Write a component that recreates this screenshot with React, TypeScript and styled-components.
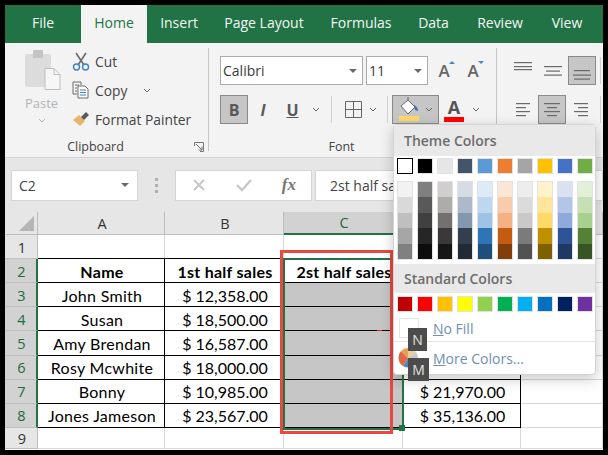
import styled, { createGlobalStyle } from "styled-components";

const GlobalStyle = createGlobalStyle`
  html, body {
    margin: 0;
    padding: 0;
    background: #000;
  }
  * {
    box-sizing: border-box;
  }
`;

const UI_FONT = `"Open Sans", "Noto Sans", sans-serif`;
const CELL_FONT = `Lato, "Open Sans", sans-serif`;
const GREEN = "#217346";

const Frame = styled.div`
  width: 608px;
  height: 455px;
  padding: 5px;
  background: #000;
  overflow: hidden;
  font-family: ${UI_FONT};
`;

const Window = styled.div`
  position: relative;
  width: 598px;
  height: 445px;
  background: #fff;
  overflow: hidden;
`;

const TabBar = styled.div`
  display: flex;
  height: 38px;
  background: ${GREEN};
`;

const Tab = styled.div<{ $w: number; $active?: boolean }>`
  width: ${(p) => p.$w}px;
  display: flex;
  align-items: center;
  justify-content: center;
  padding-bottom: 3px;
  font-size: 14px;
  color: ${(p) => (p.$active ? GREEN : "#f4f7f5")};
  background: ${(p) => (p.$active ? "#f3f3f3" : "transparent")};
`;

const Ribbon = styled.div`
  display: flex;
  height: 115px;
  background: #f3f3f3;
  border-bottom: 1px solid #d4d4d4;
`;

const Group = styled.div<{ $w: number; $last?: boolean }>`
  position: relative;
  width: ${(p) => p.$w}px;
  margin-top: 5px;
  height: 103px;
  border-right: ${(p) => (p.$last ? "none" : "1px solid #c4c4c4")};
  padding-top: 8px;
`;

const GroupLabel = styled.div`
  position: absolute;
  left: 0;
  right: 0;
  bottom: -5px;
  height: 18px;
  padding-right: 22px;
  line-height: 18px;
  text-align: center;
  font-size: 12.5px;
  color: #444;
`;

const Launcher = styled.svg`
  position: absolute;
  right: 4px;
  bottom: -1px;
`;

const ClipBody = styled.div`
  display: flex;
`;

const PasteCol = styled.div`
  width: 67px;
  display: flex;
  flex-direction: column;
  align-items: center;
  padding-left: 6px;
  margin-top: -6px;
  color: #b4b4b4;
  font-size: 13px;
`;

const PasteLabel = styled.div`
  margin: 4px 0 6px;
  line-height: 18px;
`;

const ClipList = styled.div`
  display: flex;
  flex-direction: column;
  margin-top: -9.5px;
`;

const ClipItem = styled.div`
  height: 29px;
  display: flex;
  align-items: center;
  gap: 5px;
  font-size: 13.8px;
  color: #444;
  white-space: nowrap;
`;

const IconSlot = styled.span`
  width: 18px;
  display: flex;
  justify-content: center;
`;

const ToolRow = styled.div`
  display: flex;
  align-items: center;
  height: 29px;
  margin-left: 11px;
  margin-bottom: 10px;
`;

const SelectBox = styled.div<{ $w: number }>`
  width: ${(p) => p.$w}px;
  height: 29px;
  margin-right: 3px;
  padding: 0 2px;
  display: flex;
  align-items: center;
  justify-content: space-between;
  background: #fff;
  border: 1px solid #ababab;
  font-size: 14px;
  color: #3a3a3a;
`;

const Caret = styled.span`
  width: 0;
  height: 0;
  margin-right: 3px;
  border-left: 4px solid transparent;
  border-right: 4px solid transparent;
  border-top: 4px solid #6a6a6a;
`;

const ToolBtn = styled.div<{ $w: number; $on?: boolean }>`
  width: ${(p) => p.$w}px;
  height: 29px;
  flex: none;
  display: flex;
  align-items: center;
  justify-content: center;
  gap: ${(p) => (p.$w > 40 ? 6 : 0)}px;
  border: 1px solid ${(p) => (p.$on ? "#8a8a8a" : "transparent")};
  background: ${(p) => (p.$on ? "#c6c6c6" : "transparent")};
  color: #5a5a5a;
  font-size: 16px;
`;

const Separator = styled.span<{ $ml: number; $mr: number }>`
  width: 1px;
  height: 27px;
  margin: 0 ${(p) => p.$mr}px 0 ${(p) => p.$ml}px;
  flex: none;
  background: #d0d0d0;
`;

const StyledLetter = styled.span<{ $italic?: boolean; $under?: boolean }>`
  font-family: ${UI_FONT};
  font-weight: 700;
  font-style: ${(p) => (p.$italic ? "italic" : "normal")};
  text-decoration: ${(p) => (p.$under ? "underline" : "none")};
`;

const SizeLetter = styled.span`
  position: relative;
  margin-right: 4px;
  font-size: 17px;
  line-height: 20px;
  font-weight: 600;
  color: #666;
`;

const SizeArrow = styled.span<{ $up: boolean }>`
  position: absolute;
  right: -5px;
  top: 0;
  width: 0;
  height: 0;
  border-left: 3px solid transparent;
  border-right: 3px solid transparent;
  border-bottom: ${(p) => (p.$up ? "3px solid #4a86c5" : "none")};
  border-top: ${(p) => (p.$up ? "none" : "3px solid #4a86c5")};
`;

const ColorLetter = styled.span`
  display: flex;
  flex-direction: column;
  align-items: center;
  width: 20px;
  font-size: 18px;
  line-height: 18px;
  font-weight: 700;
  color: #555;
`;

const ColorBar = styled.span`
  width: 20px;
  height: 5px;
  margin-top: 1px;
  background: #ff0000;
`;

const FormulaArea = styled.div`
  display: flex;
  align-items: center;
  height: 54px;
  padding-left: 6px;
  background: #e6e6e6;
`;

const NameBox = styled.div`
  width: 127px;
  height: 31px;
  padding: 0 5px 0 7px;
  display: flex;
  align-items: center;
  justify-content: space-between;
  background: #fff;
  border: 1px solid #d5d5d5;
  font-size: 14px;
  color: #444;
`;

const Grip = styled.div`
  width: 37px;
  display: flex;
  flex-direction: column;
  align-items: center;
  gap: 3px;
`;

const GripDot = styled.span`
  width: 3px;
  height: 3px;
  background: #b0b0b0;
`;

const FxBox = styled.div`
  width: 137px;
  height: 31px;
  padding: 0 15px 0 15px;
  display: flex;
  align-items: center;
  justify-content: space-between;
  background: #fff;
  border: 1px solid #d5d5d5;
`;

const FxText = styled.span`
  font-family: "Liberation Serif", serif;
  font-style: italic;
  font-weight: 700;
  font-size: 17px;
  color: #777;
`;

const FormulaInput = styled.div`
  flex: 1;
  height: 31px;
  margin-left: 3px;
  padding-left: 14px;
  display: flex;
  align-items: center;
  background: #fff;
  border: 1px solid #d5d5d5;
  font-size: 14px;
  color: #444;
`;

const Sheet = styled.div`
  position: relative;
  display: grid;
  grid-template-columns: 33px 127px 119px 119px 118px 82px;
  grid-template-rows: 23px 24px repeat(7, 24.14px);
  background: #fff;
  font-family: ${CELL_FONT};
  font-size: 16px;
  color: #000;
`;

const Corner = styled.div`
  position: relative;
  background: #e6e6e6;
  border-right: 1px solid #bdbdbd;
  border-bottom: 1px solid #bdbdbd;
`;

const CornerMark = styled.span`
  position: absolute;
  right: 3px;
  bottom: 3px;
  width: 0;
  height: 0;
  border-left: 15px solid transparent;
  border-bottom: 15px solid #b5b5b5;
`;

const ColHead = styled.div<{ $sel?: boolean }>`
  display: flex;
  align-items: center;
  justify-content: center;
  padding-left: 2px;
  font-family: ${UI_FONT};
  font-size: 14.5px;
  color: ${(p) => (p.$sel ? "#1d6b3f" : "#333")};
  background: ${(p) => (p.$sel ? "#d2d2d2" : "#e6e6e6")};
  border-right: 1px solid #bdbdbd;
  border-bottom: ${(p) => (p.$sel ? `2px solid ${GREEN}` : "1px solid #bdbdbd")};
`;

const RowHead = styled.div<{ $sel?: boolean }>`
  display: flex;
  align-items: center;
  justify-content: center;
  padding: 1px 0 0 2px;
  font-family: ${UI_FONT};
  font-size: 14.5px;
  color: ${(p) => (p.$sel ? "#1d6b3f" : "#333")};
  background: ${(p) => (p.$sel ? "#d2d2d2" : "#e6e6e6")};
  border-right: ${(p) => (p.$sel ? `2px solid ${GREEN}` : "1px solid #bdbdbd")};
  border-bottom: 1px solid #bdbdbd;
`;

const Cell = styled.div<{ $boxed?: boolean; $bold?: boolean; $fill?: boolean; $num?: boolean }>`
  display: flex;
  align-items: center;
  justify-content: center;
  min-width: 0;
  padding: 1px 0 0 2px;
  white-space: nowrap;
  overflow: hidden;
  letter-spacing: ${(p) => (p.$num ? 0 : 0.28)}px;
  font-weight: ${(p) => (p.$bold ? 700 : 400)};
  background: ${(p) => (p.$fill ? "#c6c6c6" : "#fff")};
  border-right: 1px solid ${(p) => (p.$boxed ? "#000" : "#d8d8d8")};
  border-bottom: 1px solid ${(p) => (p.$boxed ? "#000" : "#d8d8d8")};
`;

const TableTop = styled.div`
  position: absolute;
  left: 33px;
  top: 46px;
  width: 365px;
  height: 1px;
  background: #000;
`;

const SelectionBox = styled.div`
  position: absolute;
  left: 278px;
  top: 46px;
  width: 121px;
  height: 172px;
  border: 2px solid ${GREEN};
  pointer-events: none;
`;

const FillHandle = styled.span`
  position: absolute;
  left: 394px;
  top: 213px;
  width: 6px;
  height: 6px;
  background: ${GREEN};
`;

const RedFrame = styled.div`
  position: absolute;
  left: 275px;
  top: 38px;
  width: 113px;
  height: 184px;
  border: 3px solid #e8483f;
  pointer-events: none;
`;

const RedTick = styled.span`
  position: absolute;
  left: 372px;
  top: 118px;
  width: 5px;
  height: 1px;
  background: #e8202a;
`;

const Popover = styled.div`
  position: absolute;
  left: 388px;
  top: 119px;
  width: 203px;
  height: 251px;
  background: #fff;
  border: 1px solid #d4d4d4;
  border-radius: 4px;
  box-shadow: 0 4px 14px rgba(0, 0, 0, 0.22);
`;

const PopHeader = styled.div<{ $h: number }>`
  height: ${(p) => p.$h}px;
  padding-left: 10px;
  display: flex;
  align-items: center;
  background: #e9e9e9;
  font-size: 14px;
  font-weight: 600;
  color: #6d6d6d;
`;

const SwatchRow = styled.div<{ $mt: number; $mb: number }>`
  display: flex;
  gap: 4px;
  margin: ${(p) => p.$mt}px 0 ${(p) => p.$mb}px 3px;
`;

const Swatch = styled.span<{ $c: string; $strong?: boolean }>`
  width: 16px;
  height: 16px;
  background: ${(p) => p.$c};
  border: 1px solid ${(p) => (p.$strong ? "#000" : "#e2e2e2")};
`;

const ShadeCol = styled.div`
  width: 16px;
  display: flex;
  flex-direction: column;
  border: 1px solid #e2e2e2;
`;

const Shade = styled.span<{ $c: string }>`
  height: 15.4px;
  background: ${(p) => p.$c};
`;

const MenuRow = styled.div<{ $line?: boolean; $h: number }>`
  display: flex;
  align-items: center;
  height: ${(p) => p.$h}px;
  padding-left: 39px;
  font-size: 14px;
  color: #6f8fae;
  border-bottom: ${(p) => (p.$line ? "1px solid #e4e4e4" : "none")};
`;

const NoFillBox = styled.span`
  position: absolute;
  left: 5px;
  top: 193px;
  width: 20px;
  height: 20px;
  border: 1px solid #e4e4e4;
`;

const PieIcon = styled.svg`
  position: absolute;
  left: 4px;
  top: 223px;
`;

const KeyTip = styled.div<{ $x: number; $y: number; $w: number }>`
  position: absolute;
  left: ${(p) => p.$x}px;
  top: ${(p) => p.$y}px;
  width: ${(p) => p.$w}px;
  height: 23px;
  display: flex;
  align-items: center;
  justify-content: center;
  background: #4c4c4c;
  color: #e2e2e2;
  font-size: 14px;
`;

const Underlined = styled.span`
  text-decoration: underline;
`;

const TABS: [string, number][] = [
  ["File", 76],
  ["Home", 66],
  ["Insert", 64],
  ["Page Layout", 106],
  ["Formulas", 88],
  ["Data", 57],
  ["Review", 76],
  ["View", 58],
];

const THEME = [
  "#ffffff",
  "#000000",
  "#e7e6e6",
  "#44546a",
  "#5b9bd5",
  "#ed7d31",
  "#a5a5a5",
  "#ffc000",
  "#4472c4",
  "#70ad47",
];

const SHADES = [
  ["#f2f2f2", "#d9d9d9", "#bfbfbf", "#a6a6a6", "#808080"],
  ["#7f7f7f", "#595959", "#404040", "#262626", "#0d0d0d"],
  ["#d0cece", "#aeabab", "#757070", "#3a3838", "#171616"],
  ["#d6dce4", "#adb9ca", "#8497b0", "#333f4f", "#222b35"],
  ["#deeaf6", "#bdd7ee", "#9dc3e6", "#2e75b5", "#1e4e79"],
  ["#fbe5d5", "#f7cbac", "#f4b183", "#c55a11", "#833c0b"],
  ["#ededed", "#dbdbdb", "#c9c9c9", "#7b7b7b", "#525252"],
  ["#fff2cc", "#fee599", "#ffd966", "#bf9000", "#7f6000"],
  ["#d9e2f3", "#b4c6e7", "#8eaadb", "#2f5496", "#1f3864"],
  ["#e2efd9", "#c5e0b3", "#a8d08d", "#538135", "#375623"],
];

const STANDARD = [
  "#c00000",
  "#ff0000",
  "#ffc000",
  "#ffff00",
  "#92d050",
  "#00b050",
  "#00b0f0",
  "#0070c0",
  "#002060",
  "#7030a0",
];

const ROWS = [
  ["John Smith", "$ 12,358.00", ""],
  ["Susan", "$ 18,500.00", ""],
  ["Amy Brendan", "$ 16,587.00", ""],
  ["Rosy Mcwhite", "$ 18,000.00", ""],
  ["Bonny", "$ 10,985.00", "$ 21,970.00"],
  ["Jones Jameson", "$ 23,567.00", "$ 35,136.00"],
];

const Chevron = ({ color = "#666" }: { color?: string }) => (
  <svg width="8" height="5" viewBox="0 0 8 5">
    <path d="M1 1l3 3 3-3" fill="none" stroke={color} strokeWidth="1" />
  </svg>
);

const Lines = ({ rows }: { rows: [number, number, number][] }) => (
  <svg width="20" height="20" viewBox="0 0 20 20">
    {rows.map(([y, x, w], i) => (
      <rect key={i} x={x} y={y} width={w} height="1.2" fill="#6a6a6a" />
    ))}
  </svg>
);

const PasteIcon = () => (
  <svg width="37" height="40" viewBox="0 0 37 40" style={{ marginLeft: 3 }}>
    <rect x="0" y="4" width="26" height="33" rx="2" fill="#dcdcdc" />
    <rect x="8" y="0" width="10" height="8" rx="1" fill="#c4c4c4" />
    <path d="M20 18.5h9l6 6v15H20z" fill="#f6f6f6" stroke="#bdbdbd" />
    <path d="M29 18.5v6h6" fill="none" stroke="#bdbdbd" />
  </svg>
);

const ScissorsIcon = () => (
  <svg width="18" height="19" viewBox="0 0 18 19">
    <path d="M4 1l8 12M14 1L6 13" stroke="#6a6a6a" strokeWidth="1.6" fill="none" />
    <circle cx="4.5" cy="15" r="3" fill="none" stroke="#3f7fc4" strokeWidth="1.4" />
    <circle cx="13.5" cy="15" r="3" fill="none" stroke="#3f7fc4" strokeWidth="1.4" />
  </svg>
);

const CopyIcon = () => (
  <svg width="18" height="18" viewBox="0 0 18 18">
    <path d="M1 1h8v3M1 1v12h4" fill="none" stroke="#6a6a6a" />
    <path d="M3 4h4M3 7h2M3 10h2" stroke="#6a6a6a" />
    <path d="M6 5h7l3 3v9H6z" fill="#fff" stroke="#6a6a6a" />
    <path d="M8 9h6M8 11.5h6M8 14h6" stroke="#3f7fc4" />
  </svg>
);

const BrushIcon = () => (
  <svg width="18" height="16" viewBox="0 0 18 16">
    <path d="M1 9l6-5 6 6-5 5z" fill="#e8b66b" />
    <path d="M9 6l5-5 3 3-5 5z" fill="#5a5a5a" />
  </svg>
);

const BorderIcon = () => (
  <svg width="17" height="17" viewBox="0 0 17 17">
    <path d="M.5.5h16v16H.5zM8.5.5v16M.5 8.5h16" fill="none" stroke="#666" />
  </svg>
);

const FillIcon = () => (
  <svg width="20" height="25" viewBox="0 0 20 25">
    <path d="M2 9l7-6 7 7-7 7z" fill="#fff" stroke="#666" />
    <path d="M9 3V0" stroke="#666" />
    <path d="M15 8c2 1 4 3 4 6l-3-1z" fill="#2f6fb8" />
    <rect x="0" y="19" width="20" height="5" fill="#ffd966" />
  </svg>
);

const App = () => {
  return (
    <>
      <GlobalStyle />
      <Frame>
        <Window>
          <TabBar>
            {TABS.map(([name, w]) => (
              <Tab key={name} $w={w} $active={name === "Home"}>
                {name}
              </Tab>
            ))}
          </TabBar>

          <Ribbon>
            <Group $w={204}>
              <ClipBody>
                <PasteCol>
                  <PasteIcon />
                  <PasteLabel>Paste</PasteLabel>
                  <Chevron color="#b4b4b4" />
                </PasteCol>
                <ClipList>
                  <ClipItem>
                    <IconSlot>
                      <ScissorsIcon />
                    </IconSlot>
                    Cut
                  </ClipItem>
                  <ClipItem>
                    <IconSlot>
                      <CopyIcon />
                    </IconSlot>
                    Copy&nbsp;&nbsp;&nbsp;
                    <Chevron />
                  </ClipItem>
                  <ClipItem>
                    <IconSlot>
                      <BrushIcon />
                    </IconSlot>
                    Format Painter
                  </ClipItem>
                </ClipList>
              </ClipBody>
              <GroupLabel>Clipboard</GroupLabel>
              <Launcher width="10" height="10" viewBox="0 0 10 10">
                <path d="M.5 4V.5H9.5V9.5H6M2 2l6 6M8 4.5V8H4.5" fill="none" stroke="#777" />
              </Launcher>
            </Group>

            <Group $w={288}>
              <ToolRow>
                <SelectBox $w={143}>
                  Calibri
                  <Caret />
                </SelectBox>
                <SelectBox $w={62}>
                  11
                  <Caret />
                </SelectBox>
                <ToolBtn $w={30}>
                  <SizeLetter>
                    A
                    <SizeArrow $up />
                  </SizeLetter>
                </ToolBtn>
                <ToolBtn $w={28}>
                  <SizeLetter>
                    A
                    <SizeArrow $up={false} />
                  </SizeLetter>
                </ToolBtn>
              </ToolRow>
              <ToolRow>
                <ToolBtn $w={28} $on>
                  <StyledLetter>B</StyledLetter>
                </ToolBtn>
                <ToolBtn $w={30}>
                  <StyledLetter $italic>I</StyledLetter>
                </ToolBtn>
                <ToolBtn $w={29}>
                  <StyledLetter $under>U</StyledLetter>
                </ToolBtn>
                <ToolBtn $w={18}>
                  <Chevron />
                </ToolBtn>
                <Separator $ml={6} $mr={9} />
                <ToolBtn $w={25}>
                  <BorderIcon />
                </ToolBtn>
                <ToolBtn $w={14}>
                  <Chevron />
                </ToolBtn>
                <Separator $ml={7} $mr={4} />
                <ToolBtn $w={47} $on>
                  <FillIcon />
                  <Chevron />
                </ToolBtn>
                <ToolBtn $w={30}>
                  <ColorLetter>
                    A
                    <ColorBar />
                  </ColorLetter>
                </ToolBtn>
                <ToolBtn $w={14}>
                  <Chevron />
                </ToolBtn>
              </ToolRow>
              <GroupLabel>Font</GroupLabel>
            </Group>

            <Group $w={106} $last>
              <ToolRow>
                <ToolBtn $w={30}>
                  <Lines rows={[[1, 1, 18], [5, 1, 18], [8, 1, 18]]} />
                </ToolBtn>
                <ToolBtn $w={30}>
                  <Lines rows={[[5, 1, 18], [9.5, 3, 14], [13.5, 1, 18]]} />
                </ToolBtn>
                <ToolBtn $w={28} $on>
                  <Lines rows={[[9, 2, 16], [13.5, 1, 18], [17.5, 2, 16]]} />
                </ToolBtn>
                <Separator $ml={4} $mr={0} />
              </ToolRow>
              <ToolRow>
                <ToolBtn $w={30}>
                  <Lines rows={[[3, 3, 14], [7, 3, 10], [11, 3, 14], [15, 3, 10]]} />
                </ToolBtn>
                <ToolBtn $w={28} $on>
                  <Lines rows={[[3, 2, 16], [7, 5, 10], [11, 2, 16], [15, 5, 10]]} />
                </ToolBtn>
                <ToolBtn $w={30}>
                  <Lines rows={[[3, 3, 14], [7, 7, 10], [11, 3, 14], [15, 7, 10]]} />
                </ToolBtn>
                <Separator $ml={4} $mr={0} />
              </ToolRow>
            </Group>
          </Ribbon>

          <FormulaArea>
            <NameBox>
              C2
              <Caret />
            </NameBox>
            <Grip>
              <GripDot />
              <GripDot />
              <GripDot />
            </Grip>
            <FxBox>
              <svg width="16" height="16" viewBox="0 0 16 16">
                <path d="M3 3l10 10M13 3L3 13" stroke="#c8c8c8" strokeWidth="2" />
              </svg>
              <svg width="18" height="16" viewBox="0 0 18 16">
                <path d="M2 8l5 5L16 3" fill="none" stroke="#c8c8c8" strokeWidth="2.4" />
              </svg>
              <FxText>fx</FxText>
            </FxBox>
            <FormulaInput>2st half sales</FormulaInput>
          </FormulaArea>

          <Sheet>
            <Corner>
              <CornerMark />
            </Corner>
            <ColHead>A</ColHead>
            <ColHead>B</ColHead>
            <ColHead $sel>C</ColHead>
            <ColHead>D</ColHead>
            <ColHead />

            <RowHead>1</RowHead>
            <Cell />
            <Cell />
            <Cell />
            <Cell />
            <Cell />

            <RowHead $sel>2</RowHead>
            <Cell $boxed $bold>
              Name
            </Cell>
            <Cell $boxed $bold>
              1st half sales
            </Cell>
            <Cell $boxed $bold>
              2st half sales
            </Cell>
            <Cell $boxed />
            <Cell />

            {ROWS.map((row, i) => (
              <Row key={row[0]} index={i + 3} values={row} />
            ))}

            <RowHead>9</RowHead>
            <Cell />
            <Cell />
            <Cell />
            <Cell />
            <Cell />

            <TableTop />
            <SelectionBox />
            <FillHandle />
            <RedFrame />
            <RedTick />
          </Sheet>

          <Popover>
            <PopHeader $h={31}>Theme Colors</PopHeader>
            <SwatchRow $mt={2} $mb={7}>
              {THEME.map((c, i) => (
                <Swatch key={c} $c={c} $strong={i === 0} />
              ))}
            </SwatchRow>
            <SwatchRow $mt={0} $mb={4}>
              {SHADES.map((col) => (
                <ShadeCol key={col[0]}>
                  {col.map((c) => (
                    <Shade key={c} $c={c} />
                  ))}
                </ShadeCol>
              ))}
            </SwatchRow>
            <PopHeader $h={29}>Standard Colors</PopHeader>
            <SwatchRow $mt={3} $mb={4}>
              {STANDARD.map((c) => (
                <Swatch key={c} $c={c} />
              ))}
            </SwatchRow>
            <MenuRow $line $h={26}>
              <Underlined>N</Underlined>o Fill
            </MenuRow>
            <MenuRow $h={33}>
              <Underlined>M</Underlined>ore Colors...
            </MenuRow>
            <NoFillBox />
            <PieIcon width="20" height="20" viewBox="0 0 20 20">
              <path d="M10 10L3 3a10 10 0 0 1 7-3z" fill="#e8a054" />
              <path d="M10 10V0a10 10 0 0 1 8 4z" fill="#e6cf9a" />
              <path d="M10 10l8-6a10 10 0 0 1 2 6z" fill="#c8c8c8" />
              <path d="M10 10H20a10 10 0 0 1-3 7z" fill="#7fb09a" />
              <path d="M10 10l7 7a10 10 0 0 1-12 1z" fill="#4f86c0" />
              <path d="M10 10l-5 8a10 10 0 0 1-2-15z" fill="#de6a42" />
            </PieIcon>
          </Popover>

          <KeyTip $x={403} $y={323} $w={19}>
            N
          </KeyTip>
          <KeyTip $x={403} $y={353} $w={21}>
            M
          </KeyTip>
        </Window>
      </Frame>
    </>
  );
};

const Row = ({ index, values }: { index: number; values: string[] }) => (
  <>
    <RowHead $sel>{index}</RowHead>
    <Cell $boxed>{values[0]}</Cell>
    <Cell $boxed $num>
      {values[1]}
    </Cell>
    <Cell $boxed $fill />
    <Cell $boxed $num>
      {values[2]}
    </Cell>
    <Cell />
  </>
);

export default App;
